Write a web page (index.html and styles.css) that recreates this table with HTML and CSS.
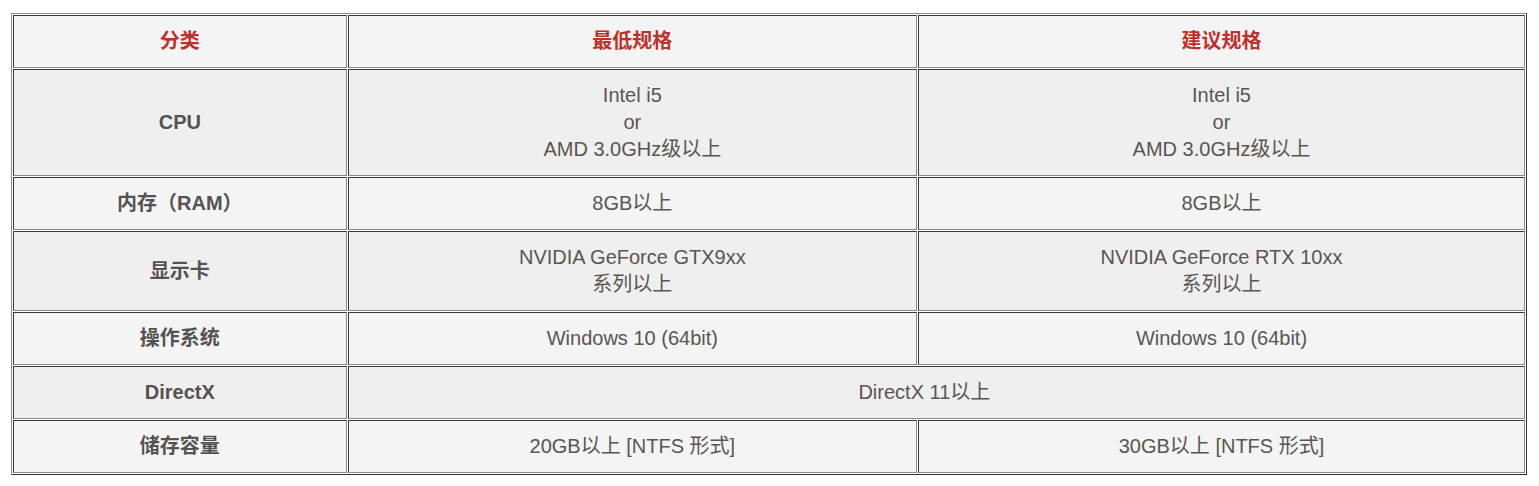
FILE: index.html
```html
<!DOCTYPE html>
<html lang="zh-CN">
<head>
<meta charset="utf-8">
<title>配置要求</title>
<link rel="stylesheet" href="styles.css">
</head>
<body>
<div class="wrap">
<table class="spec">
  <colgroup>
    <col class="col-cat">
    <col class="col-min">
    <col class="col-rec">
  </colgroup>
  <tr class="row-light head">
    <th>分类</th>
    <th>最低规格</th>
    <th>建议规格</th>
  </tr>
  <tr class="row-dark">
    <td class="cat">CPU</td>
    <td>Intel i5<br>or<br>AMD 3.0GHz级以上</td>
    <td>Intel i5<br>or<br>AMD 3.0GHz级以上</td>
  </tr>
  <tr class="row-light">
    <td class="cat">内存（RAM）</td>
    <td>8GB以上</td>
    <td>8GB以上</td>
  </tr>
  <tr class="row-dark">
    <td class="cat">显示卡</td>
    <td>NVIDIA GeForce GTX9xx<br>系列以上</td>
    <td>NVIDIA GeForce RTX 10xx<br>系列以上</td>
  </tr>
  <tr class="row-light">
    <td class="cat">操作系统</td>
    <td>Windows 10 (64bit)</td>
    <td>Windows 10 (64bit)</td>
  </tr>
  <tr class="row-dark">
    <td class="cat">DirectX</td>
    <td class="span-cell" colspan="2">DirectX 11以上</td>
  </tr>
  <tr class="row-light">
    <td class="cat">储存容量</td>
    <td>20GB以上 [NTFS 形式]</td>
    <td>30GB以上 [NTFS 形式]</td>
  </tr>
</table>
</div>
</body>
</html>
```

FILE: styles.css
```css
html, body {
  margin: 0;
  padding: 0;
  background: #ffffff;
}

.wrap {
  padding: 13px 12px 0 11px;
}

.spec {
  width: 100%;
  border-collapse: separate;
  border-spacing: 1px;
  border-style: solid;
  border-width: 1px;
  border-color: #8a8a8a #333333 #333333 #8a8a8a;
  font-family: "Liberation Sans", "Noto Sans CJK SC", Arial, sans-serif;
  font-size: 20px;
  line-height: 27px;
  color: #5a5550;
  text-align: center;
}

.col-cat { width: 22.1%; }
.col-min { width: 37.7%; }

.spec th,
.spec td {
  border-style: solid;
  border-width: 1px;
  border-color: #3a3a3a #8a8a8a #8a8a8a #3a3a3a;
  padding: 12px 8px;
  vertical-align: middle;
  text-align: center;
}

.spec th {
  color: #c0302a;
  font-weight: bold;
}

.spec .cat {
  font-weight: bold;
  color: #555250;
}

.spec .span-cell {
  padding-right: 32px;
}

.row-light th,
.row-light td {
  background: #f4f4f4;
}

.row-dark td {
  background: #efefef;
}
```
